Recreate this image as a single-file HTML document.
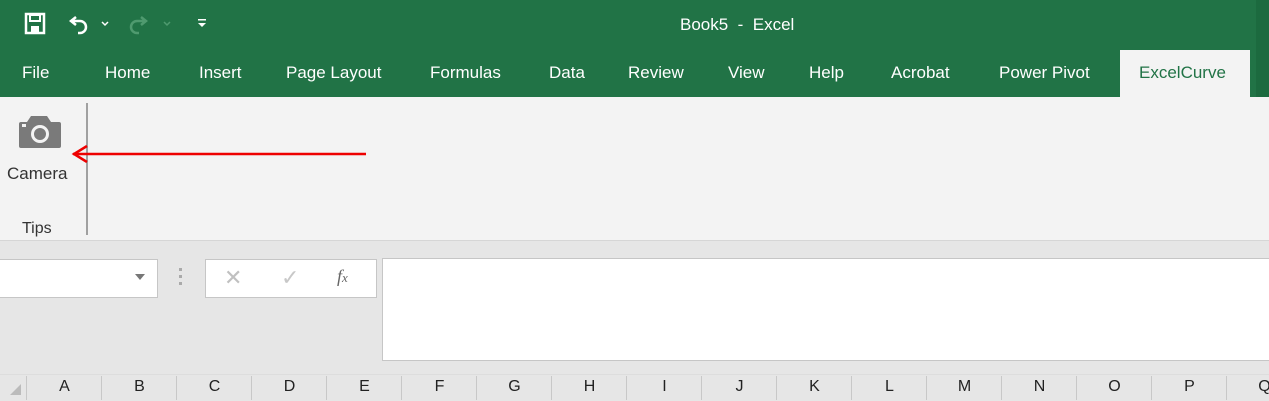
<!DOCTYPE html>
<html><head><style>
body{margin:0;width:1269px;height:400px;overflow:hidden;background:#e6e6e6;font-family:"Liberation Sans",sans-serif;position:relative}
.a{position:absolute}
.top{left:0;top:0;width:1269px;height:97px;background:#217346}
.tab{top:63px;color:#fff;font-size:17px}
</style></head><body>
<div class="a top"></div>
<div class="a" style="left:1256px;top:0;width:13px;height:97px;background:#1c6a3f"></div>
<svg class="a" style="left:24px;top:12px" width="190" height="24">
<rect x="2" y="2" width="18" height="19" fill="none" stroke="#fff" stroke-width="2.5"/>
<rect x="6" y="3" width="10" height="6" fill="none" stroke="#fff" stroke-width="2"/>
<rect x="7" y="14" width="8" height="6" fill="#fff"/>
<path d="M52 5 L47 9 L52 13 M48 9 H56 A6 6 0 0 1 56 21 H54" fill="none" stroke="#fff" stroke-width="2.5"/>
<path d="M78 10 l3 3 l3 -3" fill="none" stroke="#fff" stroke-width="1.5"/>
<path d="M117 5 L122 9 L117 13 M121 9 H113 A6 6 0 0 0 113 21 H115" fill="none" stroke="#4f9a6f" stroke-width="2.5"/>
<path d="M140 10 l3 3 l3 -3" fill="none" stroke="#4f9a6f" stroke-width="1.5"/>
<rect x="174" y="7" width="8" height="1.5" fill="#fff"/>
<path d="M174 11 h8 l-4 4z" fill="#fff"/>
</svg>
<div class="a" style="left:680px;top:15px;color:#fff;font-size:17px">Book5&nbsp; - &nbsp;Excel</div>
<div class="a tab" style="left:22px">File</div>
<div class="a tab" style="left:105px">Home</div>
<div class="a tab" style="left:199px">Insert</div>
<div class="a tab" style="left:286px">Page Layout</div>
<div class="a tab" style="left:430px">Formulas</div>
<div class="a tab" style="left:549px">Data</div>
<div class="a tab" style="left:628px">Review</div>
<div class="a tab" style="left:728px">View</div>
<div class="a tab" style="left:809px">Help</div>
<div class="a tab" style="left:891px">Acrobat</div>
<div class="a tab" style="left:999px">Power Pivot</div>
<div class="a" style="left:1120px;top:50px;width:130px;height:50px;background:#f3f3f3"></div>
<div class="a tab" style="left:1139px;color:#217346">ExcelCurve</div>
<div class="a" style="left:0;top:97px;width:1269px;height:143px;background:#f3f3f3;border-bottom:1px solid #d6d6d6"></div>
<div class="a" style="left:86px;top:103px;width:2px;height:132px;background:#a0a0a0"></div>
<svg class="a" style="left:17px;top:114px" width="46" height="36">
<path d="M4 8 H10 L14 2 H30 L34 8 H42 Q44 8 44 10 V32 Q44 34 42 34 H4 Q2 34 2 32 V10 Q2 8 4 8z" fill="#7a7a7a"/>
<circle cx="23" cy="20" r="9" fill="#f3f3f3"/><circle cx="23" cy="20" r="6" fill="#7a7a7a"/>
<rect x="5" y="10" width="4" height="3" fill="#f3f3f3"/>
</svg>
<div class="a" style="left:7px;top:164px;font-size:17px;color:#333">Camera</div>
<div class="a" style="left:22px;top:220px;font-size:16px;color:#333">Tips</div>
<svg class="a" style="left:70px;top:144px" width="300" height="20">
<path d="M3 10 H296" stroke="#e00" stroke-width="2.5"/>
<path d="M17 2 L4 10 L17 18" fill="none" stroke="#e00" stroke-width="2.5"/>
</svg>
<div class="a" style="left:-2px;top:259px;width:158px;height:37px;background:#fff;border:1px solid #c6c6c6"></div>
<div class="a" style="left:135px;top:274px;width:0;height:0;border:5px solid transparent;border-top:6px solid #777"></div>
<div class="a" style="left:179px;top:268px;width:3px;height:20px;background:repeating-linear-gradient(#aaa 0 3px,transparent 3px 7px)"></div>
<div class="a" style="left:205px;top:259px;width:170px;height:37px;background:#fff;border:1px solid #c6c6c6"></div>
<div class="a" style="left:224px;top:265px;font-size:22px;color:#c0c0c0">✕</div>
<div class="a" style="left:281px;top:265px;font-size:22px;color:#c8c8c8">✓</div>
<div class="a" style="left:337px;top:266px;font-size:18px;color:#666;font-style:italic;font-family:'Liberation Serif',serif">f<span style="font-size:13px">x</span></div>
<div class="a" style="left:382px;top:258px;width:900px;height:101px;background:#fff;border:1px solid #c6c6c6"></div>
<div class="a" style="left:0;top:374px;width:1269px;height:26px;background:#e6e6e6;border-top:1px solid #ddd"></div>
<svg class="a" style="left:8px;top:382px" width="14" height="14"><path d="M13 2 V13 H2z" fill="#bbb"/></svg>
<div id="cols"></div>
<script>
var L="ABCDEFGHIJKLMNOPQ",h="";
for(var i=0;i<L.length;i++){var c=64+75*i;
h+='<div class="a" style="left:'+(c-37)+'px;top:378px;width:75px;text-align:center;font-size:16px;color:#222">'+L[i]+'</div>';
h+='<div class="a" style="left:'+(c-38)+'px;top:376px;width:1px;height:24px;background:#c8c8c8"></div>';}
document.getElementById('cols').innerHTML=h;
</script>
</body></html>
